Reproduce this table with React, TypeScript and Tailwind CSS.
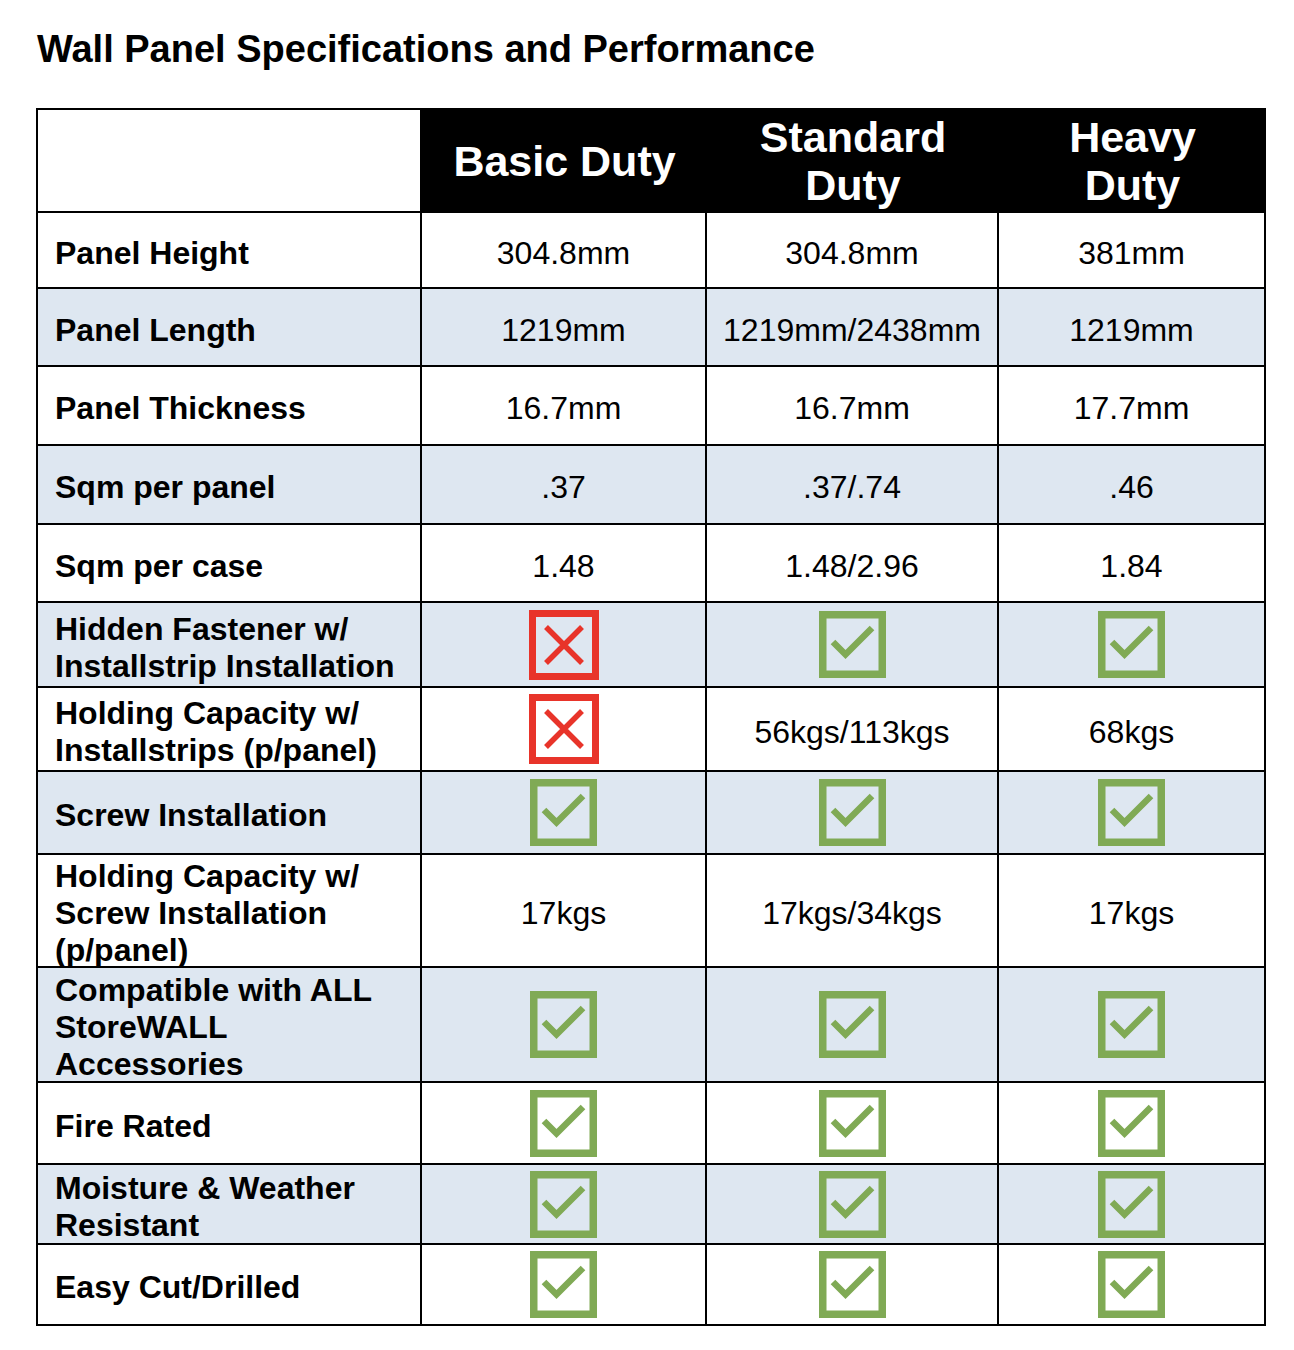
type Cell = string | "check" | "cross";

interface Row {
  label: string[];
  values: Cell[];
  height: string;
  shaded: boolean;
}

const rows: Row[] = [
  { label: ["Panel Height"], values: ["304.8mm", "304.8mm", "381mm"], height: "h-[76px]", shaded: false },
  { label: ["Panel Length"], values: ["1219mm", "1219mm/2438mm", "1219mm"], height: "h-[78px]", shaded: true },
  { label: ["Panel Thickness"], values: ["16.7mm", "16.7mm", "17.7mm"], height: "h-[79px]", shaded: false },
  { label: ["Sqm per panel"], values: [".37", ".37/.74", ".46"], height: "h-[79px]", shaded: true },
  { label: ["Sqm per case"], values: ["1.48", "1.48/2.96", "1.84"], height: "h-[78px]", shaded: false },
  {
    label: ["Hidden Fastener w/", "Installstrip Installation"],
    values: ["cross", "check", "check"],
    height: "h-[85px]",
    shaded: true,
  },
  {
    label: ["Holding Capacity w/", "Installstrips (p/panel)"],
    values: ["cross", "56kgs/113kgs", "68kgs"],
    height: "h-[84px]",
    shaded: false,
  },
  { label: ["Screw Installation"], values: ["check", "check", "check"], height: "h-[83px]", shaded: true },
  {
    label: ["Holding Capacity w/", "Screw Installation", "(p/panel)"],
    values: ["17kgs", "17kgs/34kgs", "17kgs"],
    height: "h-[113px]",
    shaded: false,
  },
  {
    label: ["Compatible with ALL", "StoreWALL", "Accessories"],
    values: ["check", "check", "check"],
    height: "h-[115px]",
    shaded: true,
  },
  { label: ["Fire Rated"], values: ["check", "check", "check"], height: "h-[82px]", shaded: false },
  {
    label: ["Moisture & Weather", "Resistant"],
    values: ["check", "check", "check"],
    height: "h-[80px]",
    shaded: true,
  },
  { label: ["Easy Cut/Drilled"], values: ["check", "check", "check"], height: "h-[81px]", shaded: false },
];

const colWidths = ["w-[285px]", "w-[292px]", "w-[267px]"];

function CheckBox() {
  return (
    <svg width="67" height="67" viewBox="0 0 67 67">
      <rect x="3.75" y="3.75" width="59.5" height="59.5" fill="none" stroke="#80aa55" strokeWidth="7.5" />
      <polyline points="14,31 26.5,43.5 53,17" fill="none" stroke="#80aa55" strokeWidth="6.5" />
    </svg>
  );
}

function CrossBox() {
  return (
    <svg width="70" height="70" viewBox="0 0 70 70">
      <rect x="3.5" y="3.5" width="63" height="63" fill="none" stroke="#e8342a" strokeWidth="7" />
      <path d="M17 17 L53 53 M53 17 L17 53" fill="none" stroke="#e8342a" strokeWidth="5.5" />
    </svg>
  );
}

function ValueCell({ value, width }: { value: Cell; width: string }) {
  return (
    <div className={`${width} shrink-0 border-r-2 border-black flex items-center justify-center`}>
      {value === "check" ? (
        <CheckBox />
      ) : value === "cross" ? (
        <CrossBox />
      ) : (
        <span className="pt-[6px] text-[32px] leading-[37px] text-black">{value}</span>
      )}
    </div>
  );
}

export default function App() {
  return (
    <div className="w-[1294px] min-h-[1350px] bg-white px-[36px] pt-[27px] font-['Liberation_Sans',Arial,sans-serif]">
      <h1 className="pl-[1px] text-[38px] leading-[44px] font-bold text-black">
        Wall Panel Specifications and Performance
      </h1>

      <div className="mt-[37px] w-[1230px] border-l-2 border-t-2 border-black">
        {/* header */}
        <div className="flex h-[103px] border-b-2 border-black">
          <div className="w-[384px] shrink-0 border-r-2 border-black bg-white" />
          <div className="flex flex-1 bg-black text-white font-bold text-[43px] leading-[48px] text-center">
            <div className="w-[285px] shrink-0 flex items-center justify-center">Basic Duty</div>
            <div className="w-[292px] shrink-0 flex items-center justify-center">
              Standard
              <br />
              Duty
            </div>
            <div className="w-[267px] shrink-0 flex items-center justify-center">
              Heavy
              <br />
              Duty
            </div>
          </div>
        </div>

        {rows.map((row, i) => (
          <div
            key={i}
            className={`flex ${row.height} border-b-2 border-black ${row.shaded ? "bg-[#dee7f1]" : "bg-white"}`}
          >
            <div className="w-[384px] shrink-0 border-r-2 border-black flex flex-col justify-center pl-[17px] pt-[6px] text-[32px] leading-[37px] font-bold text-black">
              {row.label.map((line) => (
                <div key={line} className="whitespace-nowrap">
                  {line}
                </div>
              ))}
            </div>
            {row.values.map((v, j) => (
              <ValueCell key={j} value={v} width={colWidths[j]} />
            ))}
          </div>
        ))}
      </div>
    </div>
  );
}
